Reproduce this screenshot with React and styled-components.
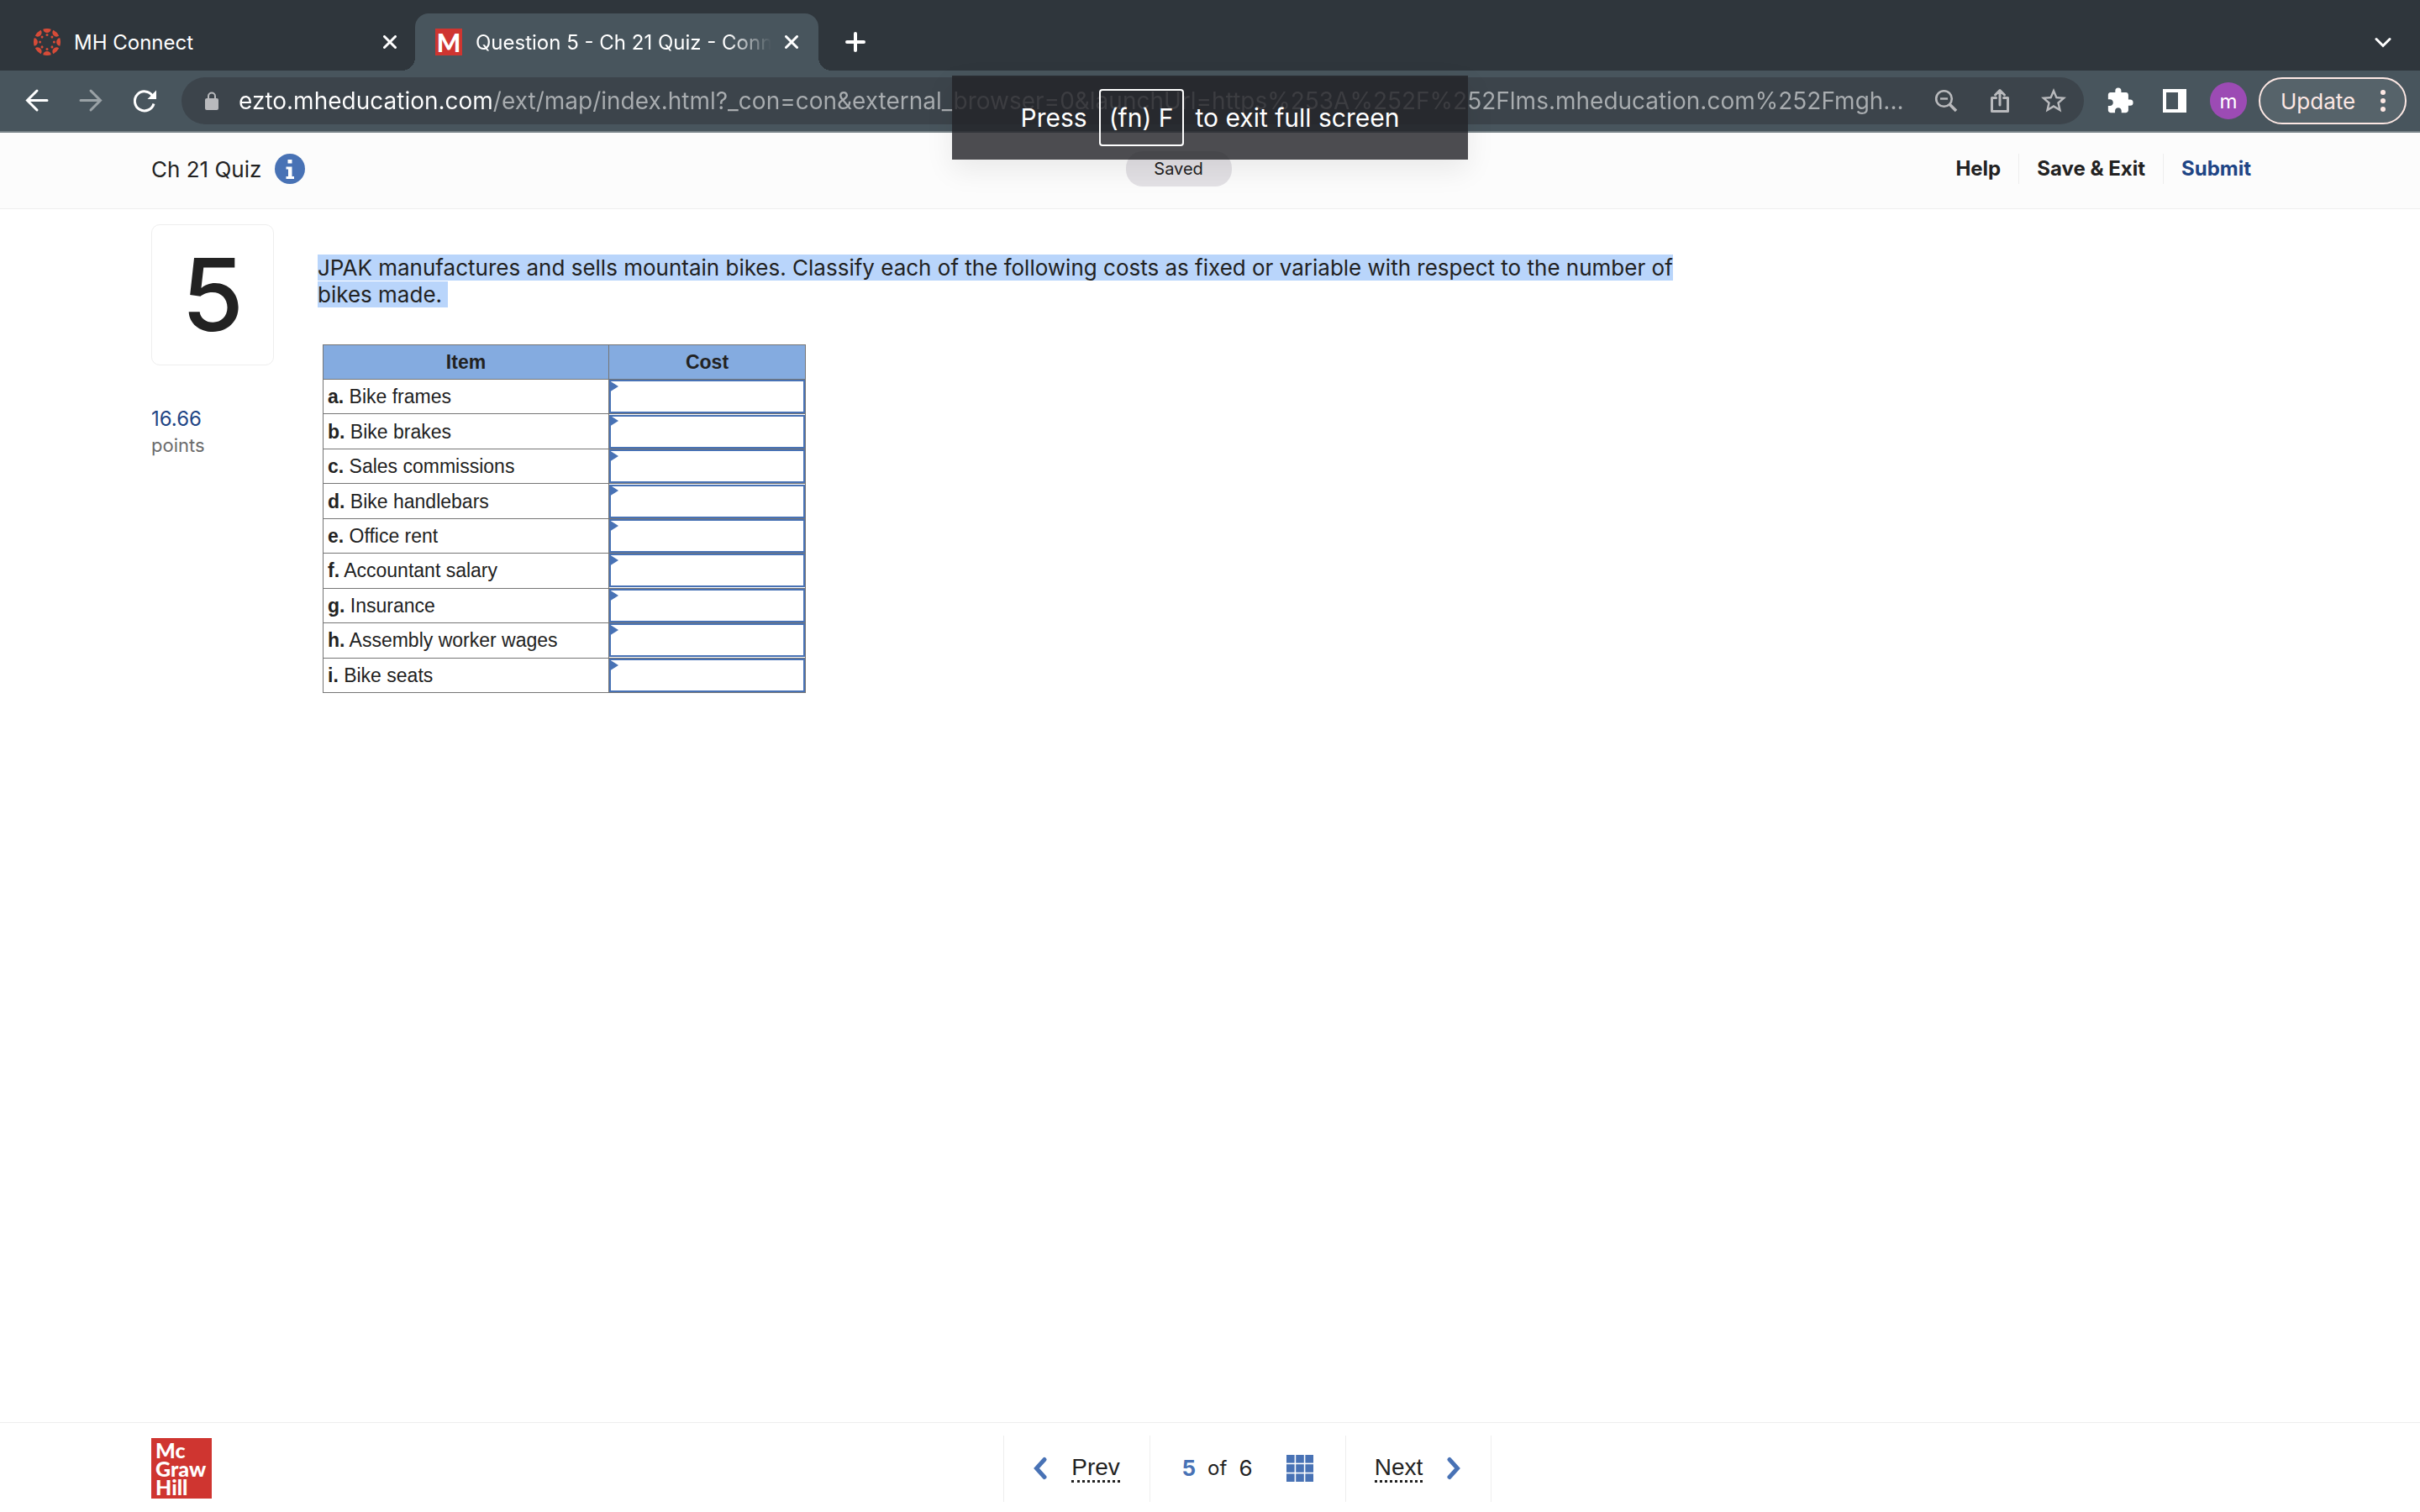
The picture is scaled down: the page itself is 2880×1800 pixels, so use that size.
import { useState } from 'react'
import styled, { createGlobalStyle, css } from 'styled-components'
import { MdExtension, MdStarBorder } from 'react-icons/md'

const colors = {
  strip: '#2f363c',
  toolbar: '#48555d',
  field: '#3c444b',
  blue: '#4872b5',
  navy: '#1f4585',
  ink: '#222222',
  line: '#eeeeee',
  red: '#cf3530',
}

const host = 'ezto.mheducation.com'
const path =
  '/ext/map/index.html?_con=con&external_browser=0&launchUrl=https%253A%252F%252Flms.mheducation.com%252Fmgh...'

const items = [
  { letter: 'a', name: 'Bike frames' },
  { letter: 'b', name: 'Bike brakes' },
  { letter: 'c', name: 'Sales commissions' },
  { letter: 'd', name: 'Bike handlebars' },
  { letter: 'e', name: 'Office rent' },
  { letter: 'f', name: 'Accountant salary' },
  { letter: 'g', name: 'Insurance' },
  { letter: 'h', name: 'Assembly worker wages' },
  { letter: 'i', name: 'Bike seats' },
]

function App() {
  return (
    <>
      <GlobalStyle />
      <Page>
        <BrowserBar />
        <QuizHeader />
        <Question />
        <QuizFooter />
        <Toast role="status">
          <span>Press</span>
          <kbd>(fn) F</kbd>
          <span>to exit full screen</span>
        </Toast>
      </Page>
    </>
  )
}

function BrowserBar() {
  const [url, setUrl] = useState(host + path)

  return (
    <div>
      <TabStrip>
        <Tab>
          <CanvasIcon />
          <TabTitle>MH Connect</TabTitle>
          <CloseTab />
        </Tab>
        <Tab $active>
          <Favicon>M</Favicon>
          <TabTitle $fade>Question 5 - Ch 21 Quiz - Conn</TabTitle>
          <CloseTab />
        </Tab>
        <NewTab aria-label="New tab">
          <Stroke width="24" height="24" viewBox="0 0 24 24" strokeWidth="4">
            <path d="M12 2v20M2 12h20" />
          </Stroke>
        </NewTab>
        <SearchTabs aria-label="Search tabs">
          <Stroke width="20" height="14" viewBox="0 0 20 14" strokeWidth="3">
            <path d="M2 2.500l8 8 8-8" />
          </Stroke>
        </SearchTabs>
      </TabStrip>
      <Toolbar>
        <NavButtons>
          <IconButton aria-label="Back">
            <Stroke width="32" height="32" viewBox="0 0 32 32" strokeWidth="3">
              <path d="M28 15.500H5M16 4L4.500 15.500 16 27" />
            </Stroke>
          </IconButton>
          <IconButton aria-label="Forward" $dim>
            <Stroke width="32" height="32" viewBox="0 0 32 32" strokeWidth="3">
              <path d="M4 15.500h23M16 4l11.500 11.500L16 27" />
            </Stroke>
          </IconButton>
          <IconButton aria-label="Reload">
            <svg width="32" height="32" viewBox="0 0 32 32" fill="none">
              <path d="M25.500 10A11.500 11.500 0 1 0 27 19.500" stroke="currentColor" strokeWidth="3" />
              <path d="M30 3.500V14H19.500z" fill="currentColor" />
            </svg>
          </IconButton>
        </NavButtons>
        <AddressBar>
          <svg width="24" height="24" viewBox="0 0 24 24">
            <rect x="4" y="9" width="16" height="14" rx="2" fill="currentColor" />
            <path d="M8 10V6.500a4 4 0 0 1 8 0V10" fill="none" stroke="currentColor" strokeWidth="2" />
          </svg>
          <UrlInput aria-label="Address" value={url} onChange={(e) => setUrl(e.target.value)} />
          <IconButton aria-label="Zoom">
            <svg width="36" height="36" viewBox="0 0 36 36" fill="none" stroke="currentColor">
              <circle cx="15.500" cy="15.500" r="9.300" strokeWidth="2.600" />
              <path d="M11 15.500h9" strokeWidth="2.400" />
              <path d="M21.500 21.500l8.500 8.500" strokeWidth="3.600" />
            </svg>
          </IconButton>
          <IconButton aria-label="Share">
            <Stroke width="32" height="32" viewBox="0 0 32 32" strokeWidth="3">
              <path d="M11.500 12.500h-5v16h19v-16h-5M16 21V4M10.500 9L16 3.500 21.500 9" strokeLinejoin="round" />
            </Stroke>
          </IconButton>
          <IconButton aria-label="Bookmark"><MdStarBorder size={36} /></IconButton>
        </AddressBar>
        <Actions>
          <IconButton aria-label="Extensions"><MdExtension size={34} /></IconButton>
          <IconButton aria-label="Side panel">
            <svg width="28" height="28" viewBox="0 0 28 28" fill="currentColor">
              <path fillRule="evenodd" d="M0 0h28v28H0zM4 4v20h14V4z" />
            </svg>
          </IconButton>
          <Avatar aria-label="Profile">m</Avatar>
          <Update>
            Update
            <svg width="8" height="28" viewBox="0 0 8 28" fill="currentColor">
              <circle cx="4" cy="4" r="3" />
              <circle cx="4" cy="14" r="3" />
              <circle cx="4" cy="24" r="3" />
            </svg>
          </Update>
        </Actions>
      </Toolbar>
    </div>
  )
}

function CloseTab() {
  return (
    <IconButton aria-label="Close tab">
      <Stroke width="16" height="16" viewBox="0 0 16 16" strokeWidth="3">
        <path d="M1.500 1.500l13 13M14.500 1.500l-13 13" />
      </Stroke>
    </IconButton>
  )
}

function CanvasIcon() {
  const angles = [0, 45, 90, 135, 180, 225, 270, 315]
  return (
    <svg width="32" height="32" viewBox="0 0 32 32" fill="#d64b38">
      {angles.map((a) => (
        <g key={a} transform={`rotate(${a} 16 16)`}>
          <path d="M11.300 .7a16 16 0 0 1 9.400 0a4.700 4.200 0 0 1-9.400 0z" />
          <circle cx="16" cy="7.600" r="1.500" />
        </g>
      ))}
    </svg>
  )
}

function QuizHeader() {
  return (
    <Header>
      <Title>
        Ch 21 Quiz
        <IconButton aria-label="Quiz information">
          <svg width="36" height="36" viewBox="0 0 36 36">
            <circle cx="18" cy="18" r="18" fill={colors.blue} />
            <path d="M15.500 7h5v4.500h-5zM13.500 15.500h7v11.500h2.500v3H13.500v-3H16v-8.500h-2.500z" fill="#fff" />
          </svg>
        </IconButton>
      </Title>
      <Saved>Saved</Saved>
      <HeaderNav>
        <a href="#help">Help</a>
        <a href="#exit">Save &amp; Exit</a>
        <SubmitLink href="#submit">Submit</SubmitLink>
      </HeaderNav>
    </Header>
  )
}

function Question() {
  return (
    <Main>
      <Aside>
        <NumberBox>5</NumberBox>
        <Points>16.66</Points>
        <PointsLabel>points</PointsLabel>
      </Aside>
      <Body>
        <Prompt>
          <mark>
            JPAK manufactures and sells mountain bikes. Classify each of the following costs as fixed
            or variable with respect to the number of bikes made.&nbsp;
          </mark>
        </Prompt>
        <Table>
          <thead>
            <tr>
              <ItemHead scope="col">Item</ItemHead>
              <th scope="col">Cost</th>
            </tr>
          </thead>
          <tbody>
            {items.map(({ letter, name }) => (
              <tr key={letter}>
                <td>
                  <label htmlFor={`cost-${letter}`}>
                    <b>{letter}.</b> {name}
                  </label>
                </td>
                <AnswerCell>
                  <Answer id={`cost-${letter}`} type="text" />
                </AnswerCell>
              </tr>
            ))}
          </tbody>
        </Table>
      </Body>
    </Main>
  )
}

function QuizFooter() {
  return (
    <Footer>
      <Logo>
        Mc
        <br />
        Graw
        <br />
        Hill
      </Logo>
      <Pager>
        <PagerCell>
          <Chevron width="18" height="28" viewBox="0 0 18 28" strokeWidth="5">
            <path d="M14 3.500L4.500 14 14 24.500" />
          </Chevron>
          <a href="#prev">Prev</a>
        </PagerCell>
        <PageCount>
          <strong>5</strong>
          <small>of</small>
          <span>6</span>
          <IconButton aria-label="Question list">
            <svg width="32" height="32" viewBox="0 0 32 32" fill={colors.blue}>
              {[0, 1, 2].map((row) =>
                [0, 1, 2].map((col) => (
                  <rect key={`${row}${col}`} x={col * 11.200} y={row * 11.200} width="9.600" height="9.600" />
                ))
              )}
            </svg>
          </IconButton>
        </PageCount>
        <PagerCell>
          <a href="#next">Next</a>
          <Chevron width="18" height="28" viewBox="0 0 18 28" strokeWidth="5">
            <path d="M4 3.500L13.500 14 4 24.500" />
          </Chevron>
        </PagerCell>
      </Pager>
    </Footer>
  )
}

const GlobalStyle = createGlobalStyle`
  * {
    box-sizing: border-box;
  }
  body {
    margin: 0;
    background: #fff;
    color: ${colors.ink};
    font-family: Inter, "Open Sans", sans-serif;
  }
  button {
    font: inherit;
    color: inherit;
    background: none;
    border: 0;
    padding: 0;
    cursor: pointer;
  }
  a {
    color: inherit;
    text-decoration: none;
  }
  svg {
    display: block;
    flex: none;
  }
`

const Page = styled.div`
  display: flex;
  flex-direction: column;
  min-height: 100vh;
`
const Stroke = styled.svg`
  fill: none;
  stroke: currentColor;
  stroke-linecap: round;
`
const IconButton = styled.button`
  display: flex;
  flex: none;
  opacity: ${(props) => (props.$dim ? 0.45 : 1)};
`

const TabStrip = styled.div`
  display: flex;
  align-items: flex-end;
  height: 84px;
  padding: 0 34px 0 16px;
  background: ${colors.strip};
  color: #fff;
`
const Tab = styled.div`
  position: relative;
  display: flex;
  align-items: center;
  gap: 16px;
  width: 480px;
  height: 68px;
  padding: 0 24px;
  border-radius: 16px 16px 0 0;
  ${(props) => props.$active && css`
    margin-left: -2px;
    background: ${colors.toolbar};
    &::before,
    &::after {
      content: "";
      position: absolute;
      bottom: 0;
      width: 16px;
      height: 16px;
    }
    &::before {
      right: 100%;
      background: radial-gradient(circle at 0 0, transparent 16px, ${colors.toolbar} 16px);
    }
    &::after {
      left: 100%;
      background: radial-gradient(circle at 100% 0, transparent 16px, ${colors.toolbar} 16px);
    }
  `}
`
const TabTitle = styled.span`
  flex: 1;
  overflow: hidden;
  white-space: nowrap;
  font-size: 24px;
  ${(props) => props.$fade && css`
    mask-image: linear-gradient(to right, #000 calc(100% - 52px), transparent);
  `}
`
const Favicon = styled.span`
  flex: none;
  width: 32px;
  height: 32px;
  background: ${colors.red};
  font: 900 30px/32px Lato, sans-serif;
  text-align: center;
`
const NewTab = styled(IconButton)`
  margin: 0 auto 22px 32px;
`
const SearchTabs = styled(IconButton)`
  margin-bottom: 26px;
`

const Toolbar = styled.div`
  display: flex;
  align-items: center;
  height: 74px;
  padding: 0 16px 0 28px;
  background: ${colors.toolbar};
  border-bottom: 2px solid #788388;
  color: #fff;
`
const NavButtons = styled.div`
  display: flex;
  gap: 32px;
`
const AddressBar = styled.div`
  flex: 1;
  display: flex;
  align-items: center;
  gap: 30px;
  height: 56px;
  margin-left: 28px;
  padding: 0 18px 0 24px;
  border-radius: 28px;
  background: ${colors.field};
  color: #b9babd;
`
const UrlInput = styled.input`
  flex: 1;
  min-width: 0;
  margin-left: -10px;
  padding: 0;
  border: 0;
  outline: 0;
  font: 28px/36px Inter, sans-serif;
  /* host part is brighter than the rest of the address */
  background: linear-gradient(to right, #fff 302px, #a9adb0 302px);
  background-clip: text;
  -webkit-text-fill-color: transparent;
`
const Actions = styled.div`
  display: flex;
  align-items: center;
  gap: 34px;
  margin-left: 26px;
`
const Avatar = styled.button`
  width: 44px;
  height: 44px;
  margin: 0 -6px;
  border-radius: 50%;
  background: #9c4bb4;
  font-size: 24px;
`
const Update = styled.button`
  display: flex;
  align-items: center;
  justify-content: space-between;
  width: 176px;
  height: 56px;
  margin-left: -14px;
  padding: 0 22px 0 24px;
  border: 2px solid #fde8e4;
  border-radius: 28px;
  background: #56636a;
  color: #fde8e4;
  font-size: 26px;
`

const Toast = styled.div`
  position: absolute;
  top: 90px;
  left: 50%;
  transform: translateX(-50%);
  display: flex;
  align-items: center;
  justify-content: center;
  gap: 14px;
  width: 614px;
  height: 100px;
  background: rgba(34, 34, 40, 0.81);
  box-shadow: 0 12px 32px rgba(0, 0, 0, 0.08);
  color: #fff;
  font-size: 30px;
  white-space: nowrap;
  kbd {
    display: flex;
    align-items: center;
    height: 68px;
    padding: 0 10px;
    border: 2px solid #fff;
    border-radius: 4px;
    font-family: inherit;
  }
`

const Header = styled.header`
  display: grid;
  grid-template-columns: 31fr auto 33fr;
  align-items: center;
  height: 91px;
  padding: 0 180px 4px;
  background: #fcfcfc;
  border-bottom: 1px solid ${colors.line};
`
const Title = styled.div`
  display: flex;
  align-items: center;
  gap: 16px;
  font-size: 26px;
`
const Saved = styled.div`
  width: 126px;
  border-radius: 20px;
  background: #e3e1e5;
  font-size: 20px;
  line-height: 42px;
  text-align: center;
`
const HeaderNav = styled.nav`
  display: flex;
  justify-content: flex-end;
  font-size: 24px;
  font-weight: 700;
  line-height: 36px;
  a {
    padding: 0 21px;
  }
  a + a {
    border-left: 1px solid ${colors.line};
  }
`
const SubmitLink = styled.a`
  color: ${colors.navy};
`

const Main = styled.main`
  flex: 1;
  display: flex;
  gap: 52px;
  padding: 18px 180px;
`
const Aside = styled.aside`
  width: 146px;
  font-size: 24px;
  line-height: 32px;
`
const NumberBox = styled.div`
  display: flex;
  align-items: center;
  justify-content: center;
  height: 168px;
  margin-bottom: 48px;
  border: 1px solid ${colors.line};
  border-radius: 10px;
  font-size: 120px;
  font-weight: 500;
`
const Points = styled.div`
  color: ${colors.navy};
`
const PointsLabel = styled.div`
  color: #6b6b6b;
  font-size: 22px;
  line-height: 30px;
`
const Body = styled.div`
  flex: 1;
  padding-top: 36px;
`
const Prompt = styled.p`
  max-width: 1680px;
  margin: 0;
  font-size: 26px;
  line-height: 32px;
  mark {
    background: #b9d5fb;
    color: inherit;
  }
`

const Table = styled.table`
  width: 575px;
  height: 415px;
  margin: 43px 0 0 6px;
  border-collapse: collapse;
  table-layout: fixed;
  font: 23px/28px "Liberation Sans", Arial, sans-serif;
  th,
  td {
    height: 41px;
    padding: 0 5px;
    border: 1px solid #757575;
  }
  th {
    background: #84abe0;
  }
`
const ItemHead = styled.th`
  width: 340px;
`
const AnswerCell = styled.td`
  && {
    position: relative;
    padding: 0;
  }
  &::before {
    content: "";
    position: absolute;
    top: 1px;
    left: 0;
    border: 7px solid transparent;
    border-left: 11px solid ${colors.blue};
    border-right: 0;
  }
`
const Answer = styled.input`
  display: block;
  width: 100%;
  height: 40px;
  padding: 0 12px;
  border: 2px solid ${colors.blue};
  outline: 0;
  background: #fff;
  font: inherit;
`

const Footer = styled.footer`
  display: flex;
  align-items: center;
  gap: 16px;
  height: 107px;
  padding: 2px 180px 0;
  border-top: 1px solid ${colors.line};
`
const Logo = styled.div`
  width: 72px;
  height: 72px;
  padding: 3px 5px;
  background: ${colors.red};
  color: #fff;
  font: 900 25px/22px Lato, sans-serif;
`
const Pager = styled.nav`
  flex: 1;
  display: flex;
  justify-content: center;
`
const PagerCell = styled.div`
  display: flex;
  align-items: center;
  justify-content: center;
  gap: 28px;
  width: 174px;
  height: 79px;
  border-left: 1px solid ${colors.line};
  font: 28px/30px "Liberation Sans", Arial, sans-serif;
  &:last-child {
    border-right: 1px solid ${colors.line};
  }
  a {
    border-bottom: 3px dotted ${colors.ink};
  }
`
const PageCount = styled(PagerCell)`
  gap: 14px;
  width: 233px;
  font: 26px/30px Inter, sans-serif;
  strong {
    color: ${colors.blue};
  }
  small {
    font-size: 24px;
  }
  button {
    margin-left: 26px;
  }
`
const Chevron = styled(Stroke)`
  color: ${colors.blue};
`

export default App
